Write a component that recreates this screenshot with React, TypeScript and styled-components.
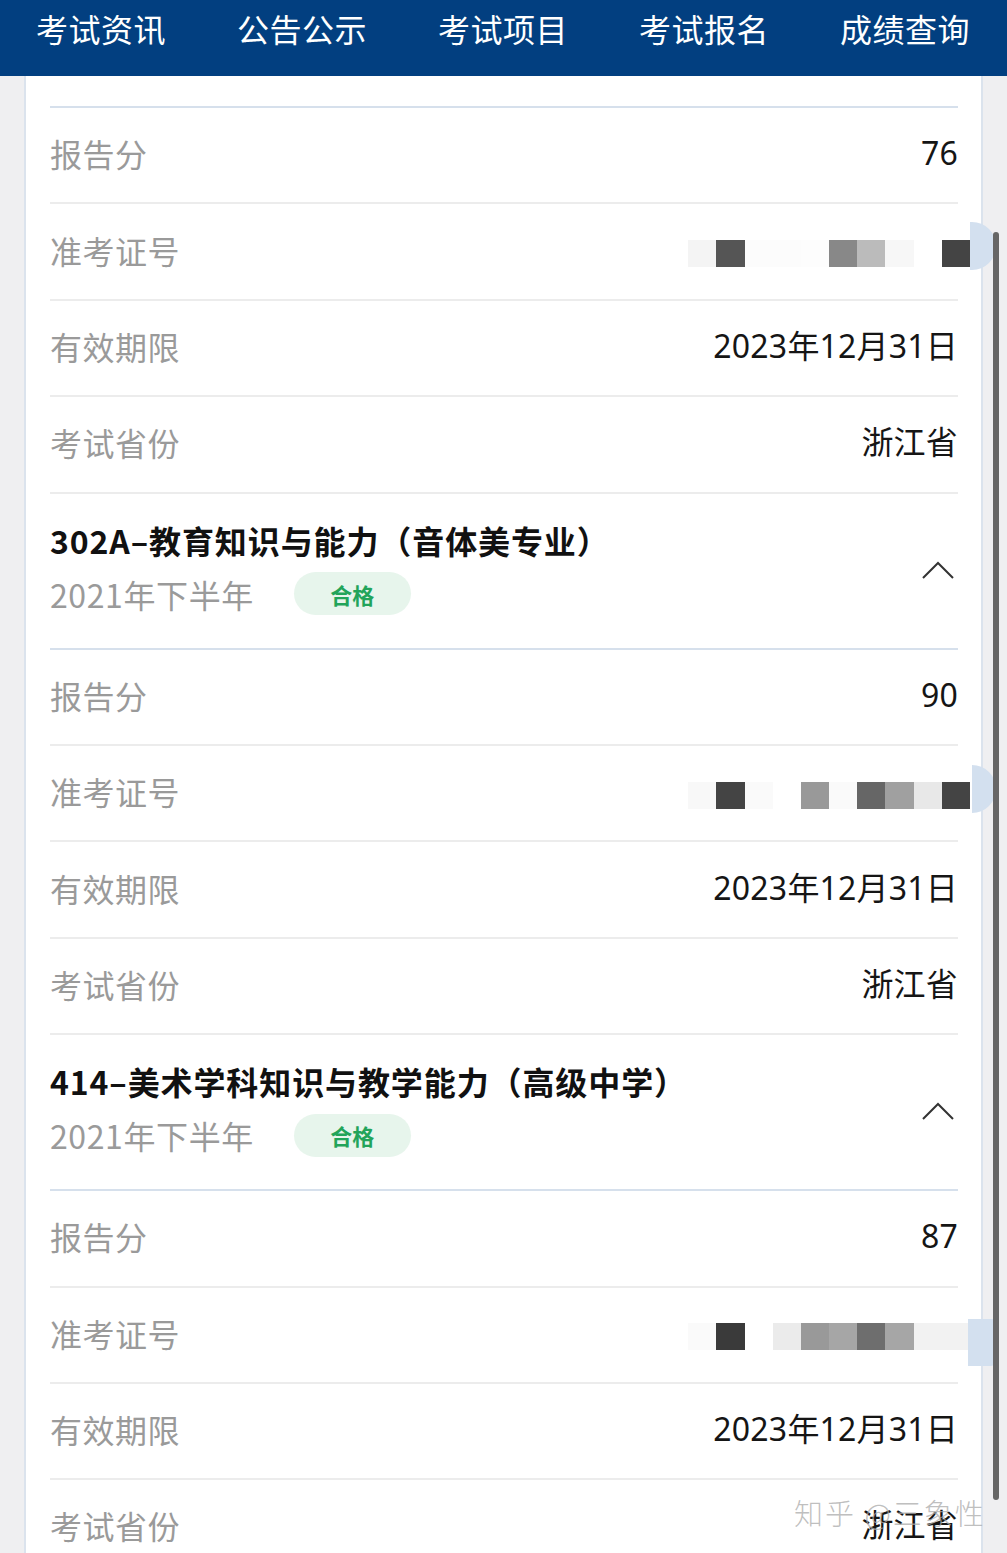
import React from "react";
import styled, { createGlobalStyle } from "styled-components";

const Global = createGlobalStyle`
  html, body { margin: 0; padding: 0; background: #efeff1; }
  body { font-family: "Noto Sans CJK SC", "Noto Sans", sans-serif; overflow: hidden; }
  * { box-sizing: border-box; }
`;

const Page = styled.div`
  position: relative;
  width: 1007px;
  height: 1553px;
  overflow: hidden;
  background: #efeff1;
`;

const Header = styled.nav`
  height: 76px;
  background: #023f80;
  display: flex;
  justify-content: space-between;
  align-items: flex-start;
  padding: 6px 37px 0 36px;
`;

const NavItem = styled.div`
  color: #ffffff;
  font-size: 32px;
  line-height: 44px;
  font-weight: 400;
  letter-spacing: 0.5px;
`;

const Card = styled.div`
  margin: 0 24px 0 24px;
  background: #ffffff;
  border-left: 2px solid #dbe3ed;
  border-right: 2px solid #dbe3ed;
  padding: 0 23px 0 24px;
  min-height: 1477px;
`;

const TopSpacer = styled.div`
  height: 32px;
  border-bottom: 2px solid #d6e0ec;
`;

const Row = styled.div`
  position: relative;
  height: 96.4px;
  display: flex;
  align-items: center;
  justify-content: space-between;
  border-bottom: 2px solid #ececec;
  padding-bottom: 4px;
`;

const Label = styled.div`
  color: #9a9a9a;
  font-size: 32px;
  line-height: 44px;
  letter-spacing: 0.5px;
`;

const Value = styled.div`
  color: #151515;
  font-size: 32px;
  line-height: 44px;
  font-family: "Noto Sans", "Noto Sans CJK SC", sans-serif;
  letter-spacing: 0.2px;
`;

const Pixels = styled.div`
  display: flex;
  height: 27px;
  margin-right: -12px;
  margin-top: 8px;
`;

const Pix = styled.div<{ $c: string }>`
  width: 28.2px;
  height: 100%;
  background: ${(p) => p.$c};
`;

const Blob = styled.div<{ $top: number; $h: number; $w: number; $round: boolean }>`
  position: absolute;
  right: -38px;
  top: ${(p) => p.$top}px;
  width: ${(p) => p.$w}px;
  height: ${(p) => p.$h}px;
  background: #d3e0ef;
  border-radius: ${(p) => (p.$round ? "0 24px 24px 0" : "0 5px 5px 0")};
`;

const Heading = styled.div`
  height: 156px;
  display: flex;
  align-items: center;
  justify-content: space-between;
  border-bottom: 2px solid #d6e0ec;
  padding-bottom: 8px;
`;

const HeadText = styled.div`
  display: flex;
  flex-direction: column;
  gap: 10px;
`;

const Title = styled.div`
  color: #111;
  font-size: 32px;
  font-weight: 700;
  line-height: 44px;
  letter-spacing: 0.9px;
`;

const SubRow = styled.div`
  display: flex;
  align-items: center;
  gap: 40px;
`;

const Period = styled.div`
  color: #9a9a9a;
  font-size: 32px;
  line-height: 44px;
  letter-spacing: 0.6px;
`;

const Badge = styled.div`
  width: 117px;
  height: 43px;
  border-radius: 22px;
  background: #e7f5ec;
  color: #22a45a;
  font-size: 22px;
  font-weight: 700;
  display: flex;
  align-items: center;
  justify-content: center;
`;

const Chevron = styled.svg`
  width: 34px;
  height: 20px;
  margin-right: 3px;
  margin-top: 6px;
`;

const ScrollBar = styled.div`
  position: absolute;
  left: 993px;
  top: 232px;
  width: 6px;
  height: 1268px;
  border-radius: 3px;
  background: #666666;
`;

const Watermark = styled.div`
  position: absolute;
  left: 794px;
  top: 1492px;
  font-size: 29px;
  line-height: 40px;
  color: rgba(170, 170, 170, 0.75);
  font-weight: 300;
  letter-spacing: 2px;
`;

type Block = string;

const redact: Block[][] = [
  ["#f4f4f4", "#555555", "#fcfcfc", "#fcfcfc", "#fdfdfd", "#888888", "#bbbbbb", "#f7f7f7", "#ffffff", "#444444"],
  ["#f8f8f8", "#444444", "#fafafa", "#ffffff", "#999999", "#fafafa", "#666666", "#a0a0a0", "#e8e8e8", "#444444"],
  ["#fafafa", "#3a3a3a", "#ffffff", "#ebebeb", "#999999", "#a6a6a6", "#6e6e6e", "#a6a6a6", "#f2f2f2", "#f2f2f2"],
];

const blobs = [
  { top: 18, h: 48, w: 26, round: true },
  { top: 19, h: 48, w: 24, round: true },
  { top: 31, h: 47, w: 28, round: false },
];

const sections = [
  { title: null as string | null, score: "76" },
  { title: "302A–教育知识与能力（音体美专业）", score: "90" },
  { title: "414–美术学科知识与教学能力（高级中学）", score: "87" },
];

function ChevronUp() {
  return (
    <Chevron viewBox="0 0 34 20">
      <polyline points="2,18 17,3 32,18" fill="none" stroke="#333" strokeWidth="2" />
    </Chevron>
  );
}

export default function App() {
  return (
    <Page>
      <Global />
      <Header>
        {["考试资讯", "公告公示", "考试项目", "考试报名", "成绩查询"].map((t) => (
          <NavItem key={t}>{t}</NavItem>
        ))}
      </Header>
      <Card>
        {sections.map((s, i) => (
          <React.Fragment key={i}>
            {s.title === null ? (
              <TopSpacer />
            ) : (
              <Heading>
                <HeadText>
                  <Title>{s.title}</Title>
                  <SubRow>
                    <Period>2021年下半年</Period>
                    <Badge>合格</Badge>
                  </SubRow>
                </HeadText>
                <ChevronUp />
              </Heading>
            )}
            <Row>
              <Label>报告分</Label>
              <Value>{s.score}</Value>
            </Row>
            <Row>
              <Label>准考证号</Label>
              <Pixels>
                {redact[i].map((c, k) => (
                  <Pix key={k} $c={c} />
                ))}
              </Pixels>
              <Blob $top={blobs[i].top} $h={blobs[i].h} $w={blobs[i].w} $round={blobs[i].round} />
            </Row>
            <Row>
              <Label>有效期限</Label>
              <Value>2023年12月31日</Value>
            </Row>
            <Row>
              <Label>考试省份</Label>
              <Value>浙江省</Value>
            </Row>
          </React.Fragment>
        ))}
      </Card>
      <ScrollBar />
      <Watermark>知乎 @三象性</Watermark>
    </Page>
  );
}
